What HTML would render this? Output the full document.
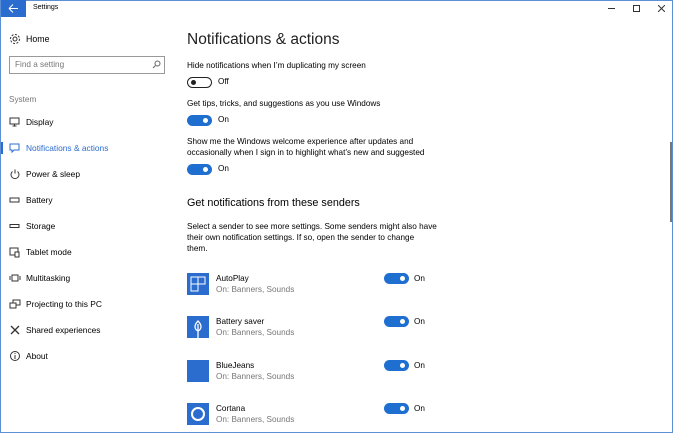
<!DOCTYPE html>
<html><head><meta charset="utf-8"><style>
*{margin:0;padding:0;box-sizing:border-box}
body{width:673px;height:433px;overflow:hidden;background:#fff;font-family:"Liberation Sans",sans-serif;color:#000;position:relative}
.a{position:absolute;white-space:nowrap;line-height:12px;font-size:8.2px}
.frame{position:absolute;left:0;top:0;width:673px;height:433px;border:1px solid #5b8fd6;border-top:none}
.tog{position:absolute;width:25px;height:11px;border-radius:6px;background:#1e6fd0}
.tog::after{content:"";position:absolute;right:4px;top:3px;width:5px;height:5px;border-radius:50%;background:#fff}
.off{background:#fff;border:1.5px solid #222}
.off::after{left:3px;right:auto;top:2px;background:#222}
.ic{position:absolute;left:187px;width:22px;height:22px;background:#2b6ccf}
.g{color:#767676}
.nav{position:absolute;left:9px;width:12px;height:12px}
.n{font-size:8.4px}
</style></head><body>
<div style="position:absolute;left:0;top:0;width:673px;height:1px;background:#5b8fd6"></div>
<div style="position:absolute;left:0;top:0;width:26px;height:17px;background:#2b6ccf"></div>
<svg style="position:absolute;left:8px;top:3px" width="11" height="11"><path d="M1 5.5H10M1 5.5L5 1.5M1 5.5L5 9.5" stroke="#fff" fill="none" stroke-width="1"/></svg>
<div class="a" style="left:33px;top:2px;font-size:7px">Settings</div>
<div style="position:absolute;left:608px;top:8px;width:7px;height:1px;background:#333"></div>
<div style="position:absolute;left:633px;top:5px;width:7px;height:7px;border:1px solid #333"></div>
<svg style="position:absolute;left:658px;top:5px" width="7" height="7"><path d="M0 0L7 7M7 0L0 7" stroke="#333"/></svg>

<svg class="nav" style="top:33px" viewBox="0 0 12 12"><circle cx="6" cy="6" r="2" fill="none" stroke="#333"/><circle cx="6" cy="6" r="4.5" fill="none" stroke="#333" stroke-dasharray="2 1.5"/></svg>
<div class="a" style="left:26px;top:33px;font-size:8.8px">Home</div>
<div style="position:absolute;left:9px;top:56px;width:156px;height:18px;border:1px solid #999"></div>
<div class="a g" style="left:15px;top:59px;font-size:8.2px">Find a setting</div>
<svg style="position:absolute;left:152px;top:60px" width="9" height="9"><circle cx="5.5" cy="3.5" r="2.5" fill="none" stroke="#666"/><path d="M3.5 5.5L1 8" stroke="#666"/></svg>
<div class="a g" style="left:9px;top:94px">System</div>

<svg class="nav" style="top:116px" viewBox="0 0 12 12"><rect x="1" y="2" width="9" height="6" fill="none" stroke="#333"/><path d="M5.5 8v2M3.5 10h4" stroke="#333"/></svg>
<div class="a n" style="left:26px;top:116px">Display</div>
<div style="position:absolute;left:0;top:142px;width:3px;height:12px;background:#2b6ccf"></div>
<svg class="nav" style="top:142px" viewBox="0 0 12 12"><path d="M1 2h9v6H5L3 10V8H1z" fill="none" stroke="#2b6ccf"/></svg>
<div class="a n" style="left:26px;top:142px;color:#2b6ccf">Notifications &amp; actions</div>
<svg class="nav" style="top:168px" viewBox="0 0 12 12"><path d="M3.5 3.5A4 4 0 1 0 8.5 3.5M6 1.5v4" stroke="#333" fill="none"/></svg>
<div class="a n" style="left:26px;top:168px">Power &amp; sleep</div>
<svg class="nav" style="top:194px" viewBox="0 0 12 12"><rect x="1" y="4" width="9" height="4" fill="none" stroke="#333"/></svg>
<div class="a n" style="left:26px;top:194px">Battery</div>
<svg class="nav" style="top:220px" viewBox="0 0 12 12"><rect x="1" y="4.5" width="9" height="3" fill="none" stroke="#333"/></svg>
<div class="a n" style="left:26px;top:220px">Storage</div>
<svg class="nav" style="top:246px" viewBox="0 0 12 12"><rect x="1" y="2" width="8" height="7" fill="none" stroke="#333"/><rect x="6" y="6" width="4" height="5" fill="#fff" stroke="#333"/></svg>
<div class="a n" style="left:26px;top:246px">Tablet mode</div>
<svg class="nav" style="top:272px" viewBox="0 0 12 12"><rect x="3" y="3" width="6" height="6" fill="none" stroke="#333"/><path d="M1 4v4M11 4v4" stroke="#333"/></svg>
<div class="a n" style="left:26px;top:272px">Multitasking</div>
<svg class="nav" style="top:298px" viewBox="0 0 12 12"><rect x="4" y="2" width="7" height="5" fill="none" stroke="#333"/><rect x="1" y="5" width="6" height="5" fill="#fff" stroke="#333"/></svg>
<div class="a n" style="left:26px;top:298px">Projecting to this PC</div>
<svg class="nav" style="top:324px" viewBox="0 0 12 12"><path d="M2 2l8 8M10 2l-8 8" stroke="#333" stroke-width="1.3"/></svg>
<div class="a n" style="left:26px;top:324px">Shared experiences</div>
<svg class="nav" style="top:350px" viewBox="0 0 12 12"><circle cx="6" cy="6" r="4.5" fill="none" stroke="#333"/><path d="M6 5v4M6 3v1" stroke="#333"/></svg>
<div class="a n" style="left:26px;top:350px">About</div>

<div class="a" style="left:187px;top:30px;font-size:15.5px;line-height:20px;color:#222">Notifications &amp; actions</div>
<div class="a" style="left:187px;top:60px">Hide notifications when I’m duplicating my screen</div>
<div class="tog off" style="left:187px;top:77px"></div><div class="a" style="left:218px;top:76px">Off</div>
<div class="a" style="left:187px;top:98px">Get tips, tricks, and suggestions as you use Windows</div>
<div class="tog" style="left:187px;top:115px"></div><div class="a" style="left:218px;top:114px">On</div>
<div class="a" style="left:187px;top:136px">Show me the Windows welcome experience after updates and</div>
<div class="a" style="left:187px;top:147px">occasionally when I sign in to highlight what’s new and suggested</div>
<div class="tog" style="left:187px;top:164px"></div><div class="a" style="left:218px;top:163px">On</div>
<div class="a" style="left:187px;top:196px;font-size:10.8px;line-height:14px">Get notifications from these senders</div>
<div class="a" style="left:187px;top:221px">Select a sender to see more settings. Some senders might also have</div>
<div class="a" style="left:187px;top:232px">their own notification settings. If so, open the sender to change</div>
<div class="a" style="left:187px;top:243px">them.</div>

<div class="ic" style="top:273px"><svg width="22" height="22"><path d="M4 4h14v7H11v7H4zM4 11h7M11 4v7" stroke="#fff" fill="none"/></svg></div>
<div class="a" style="left:216px;top:273px">AutoPlay</div><div class="a g" style="left:216px;top:284px">On: Banners, Sounds</div>
<div class="tog" style="left:384px;top:273px"></div><div class="a" style="left:414px;top:273px">On</div>

<div class="ic" style="top:316px"><svg width="22" height="22"><path d="M11 5C7 9 7 13 11 15C15 13 15 9 11 5zM11 8v14" stroke="#fff" fill="none" stroke-width="1.3"/></svg></div>
<div class="a" style="left:216px;top:316px">Battery saver</div><div class="a g" style="left:216px;top:327px">On: Banners, Sounds</div>
<div class="tog" style="left:384px;top:316px"></div><div class="a" style="left:414px;top:316px">On</div>

<div class="ic" style="top:360px"></div>
<div class="a" style="left:216px;top:360px">BlueJeans</div><div class="a g" style="left:216px;top:371px">On: Banners, Sounds</div>
<div class="tog" style="left:384px;top:360px"></div><div class="a" style="left:414px;top:360px">On</div>

<div class="ic" style="top:403px"><svg width="22" height="22"><circle cx="11" cy="11" r="6" stroke="#fff" stroke-width="2" fill="none"/></svg></div>
<div class="a" style="left:216px;top:403px">Cortana</div><div class="a g" style="left:216px;top:414px">On: Banners, Sounds</div>
<div class="tog" style="left:384px;top:403px"></div><div class="a" style="left:414px;top:403px">On</div>

<div style="position:absolute;left:670px;top:142px;width:2px;height:80px;background:#777"></div>
<div class="frame"></div>
</body></html>
